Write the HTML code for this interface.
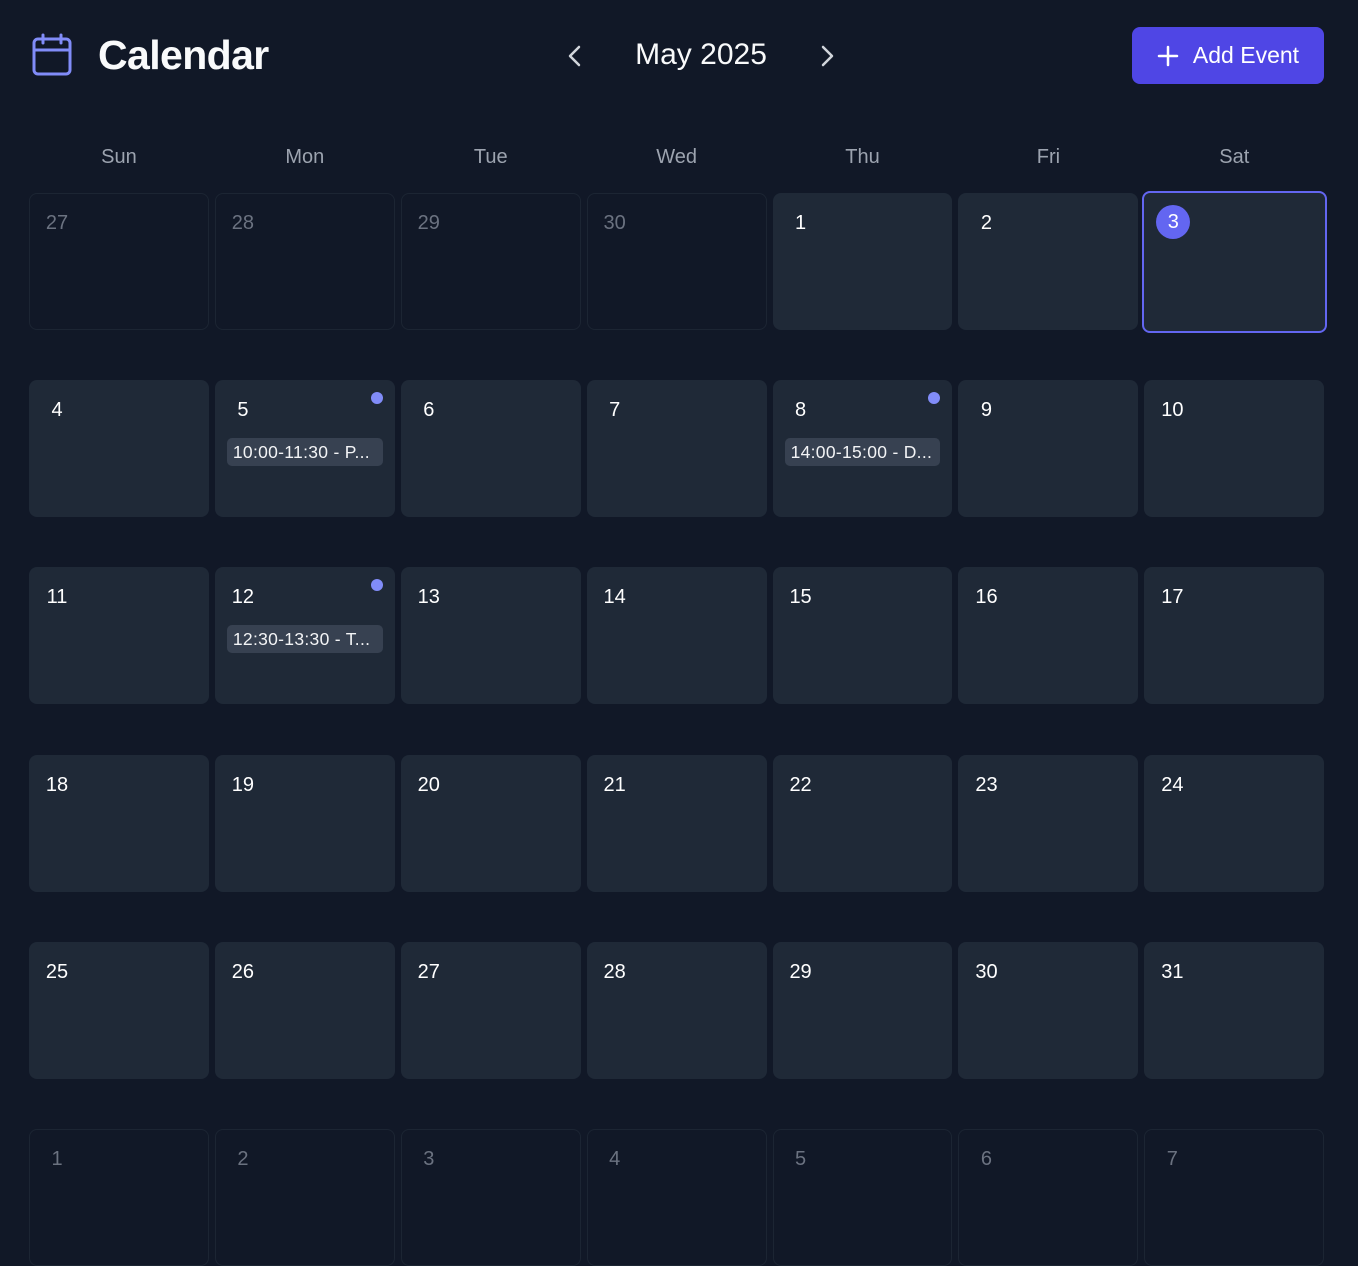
<!DOCTYPE html>
<html><head><meta charset="utf-8"><style>
*{box-sizing:border-box;margin:0;padding:0}
body{width:1358px;height:1253px;background:#111827;font-family:"Liberation Sans",sans-serif;color:#f3f4f6;position:relative;overflow:hidden}
.title{position:absolute;left:98px;top:32px;font-size:41px;font-weight:bold;letter-spacing:-0.6px;color:#f9fafb}
.month{position:absolute;left:601px;width:200px;text-align:center;top:38px;font-size:30px;color:#f9fafb}
.btn{position:absolute;left:1132px;top:27px;width:192px;height:57px;background:#4f46e5;border-radius:8px;color:#fff;font-size:23px;display:flex;align-items:center;justify-content:center;gap:14px}
.hdr{position:absolute;left:29px;top:146px;width:1296px;display:grid;grid-template-columns:repeat(7,179.9px);column-gap:6px;font-size:20px;color:#9ca3af;text-align:center}
.grid{position:absolute;left:29px;top:193px;display:grid;grid-template-columns:repeat(7,179.9px);grid-auto-rows:137px;column-gap:6px;row-gap:50.2px}
.c{background:#1f2937;border-radius:8px;position:relative;padding:16px 12px 12px}
.c.o{background:#111827;border:1px solid #1c2533;padding:15px 11px 11px}
.c.o .n{color:#6b7280}
.n{width:32px;height:28px;line-height:28px;text-align:center;font-size:20px;color:#fff}
.c.t{border:2px solid #6366f1;padding:12.5px;margin:-2.5px}
.c.t .n{background:#6366f1;border-radius:50%;width:34px;height:34px;line-height:34px}
.d{position:absolute;right:12px;top:12px;width:12px;height:12px;border-radius:50%;background:#818cf8}
.e{margin-top:14px;height:28px;line-height:28px;background:#374151;border-radius:5px;font-size:17.5px;letter-spacing:0.3px;padding-left:6px;color:#f3f4f6;white-space:nowrap}
</style></head><body>
<svg style="position:absolute;left:32px;top:33px" width="40" height="44" viewBox="0 0 40 44" fill="none" stroke="#818cf8" stroke-width="3" stroke-linecap="round"><rect x="2" y="6" width="36" height="35" rx="4"/><line x1="2" y1="17" x2="38" y2="17"/><line x1="11" y1="2" x2="11" y2="10"/><line x1="29" y1="2" x2="29" y2="10"/></svg>
<div class="title">Calendar</div>
<svg style="position:absolute;left:566px;top:44px" width="16" height="24" viewBox="0 0 16 24" fill="none" stroke="#d1d5db" stroke-width="2.5" stroke-linecap="round" stroke-linejoin="round"><path d="M13 3 L4 12 L13 21"/></svg>
<div class="month">May 2025</div>
<svg style="position:absolute;left:820px;top:44px" width="16" height="24" viewBox="0 0 16 24" fill="none" stroke="#d1d5db" stroke-width="2.5" stroke-linecap="round" stroke-linejoin="round"><path d="M3 3 L12 12 L3 21"/></svg>
<div class="btn"><svg width="22" height="22" viewBox="0 0 22 22" stroke="#fff" stroke-width="2.5" stroke-linecap="round"><path d="M11 2V20M2 11H20"/></svg><span>Add Event</span></div>
<div class="hdr"><div>Sun</div><div>Mon</div><div>Tue</div><div>Wed</div><div>Thu</div><div>Fri</div><div>Sat</div></div>
<div class="grid">
<div class="c o"><div class="n">27</div></div><div class="c o"><div class="n">28</div></div><div class="c o"><div class="n">29</div></div><div class="c o"><div class="n">30</div></div><div class="c"><div class="n">1</div></div><div class="c"><div class="n">2</div></div><div class="c t"><div class="n">3</div></div>
<div class="c"><div class="n">4</div></div><div class="c"><div class="d"></div><div class="n">5</div><div class="e">10:00-11:30 - P...</div></div><div class="c"><div class="n">6</div></div><div class="c"><div class="n">7</div></div><div class="c"><div class="d"></div><div class="n">8</div><div class="e">14:00-15:00 - D...</div></div><div class="c"><div class="n">9</div></div><div class="c"><div class="n">10</div></div>
<div class="c"><div class="n">11</div></div><div class="c"><div class="d"></div><div class="n">12</div><div class="e">12:30-13:30 - T...</div></div><div class="c"><div class="n">13</div></div><div class="c"><div class="n">14</div></div><div class="c"><div class="n">15</div></div><div class="c"><div class="n">16</div></div><div class="c"><div class="n">17</div></div>
<div class="c"><div class="n">18</div></div><div class="c"><div class="n">19</div></div><div class="c"><div class="n">20</div></div><div class="c"><div class="n">21</div></div><div class="c"><div class="n">22</div></div><div class="c"><div class="n">23</div></div><div class="c"><div class="n">24</div></div>
<div class="c"><div class="n">25</div></div><div class="c"><div class="n">26</div></div><div class="c"><div class="n">27</div></div><div class="c"><div class="n">28</div></div><div class="c"><div class="n">29</div></div><div class="c"><div class="n">30</div></div><div class="c"><div class="n">31</div></div>
<div class="c o"><div class="n">1</div></div><div class="c o"><div class="n">2</div></div><div class="c o"><div class="n">3</div></div><div class="c o"><div class="n">4</div></div><div class="c o"><div class="n">5</div></div><div class="c o"><div class="n">6</div></div><div class="c o"><div class="n">7</div></div>
</div>
</body></html>
